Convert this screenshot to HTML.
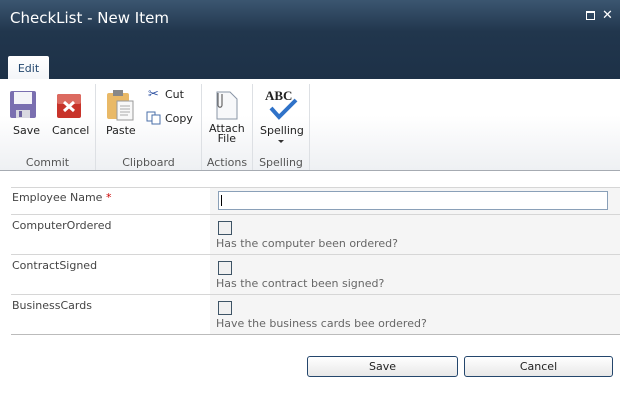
<!DOCTYPE html><html><head><style>
body{margin:0;width:620px;height:411px;background:#fff;font-family:Tahoma,"DejaVu Sans","Liberation Sans",sans-serif;font-size:11px;color:#444;position:relative;overflow:hidden}
.a{position:absolute}
.hdr{left:0;top:0;width:620px;height:79px;background:linear-gradient(#3b5670,#21364d 40%,#1d3147)}
.title{left:10px;top:9px;color:#fff;font-size:15px;font-family:"DejaVu Sans",sans-serif}
.tab{left:8px;top:56px;width:41px;height:24px;background:linear-gradient(#fff,#f3f5f8);border-radius:2px 2px 0 0;text-align:center;line-height:26px;color:#23476e;font-size:11px}
.rib{left:0;top:79px;width:620px;height:91px;background:linear-gradient(#fff 0,#fff 40%,#eef0f3);border-bottom:1px solid #a6abb2}
.sep{top:84px;width:1px;height:86px;background:#dde0e4}
.lbl{top:156px;font-size:11px;color:#555;text-align:center}
.t{font-size:11px;color:#222;text-align:center}
.line{left:11px;width:609px;height:1px;background:#d6d6d6}
.val{left:210px;top:187px;width:410px;height:147px;background:#f5f5f5}
.cb{width:12px;height:12px;border:1px solid #3e5466;background:#f0f0f0;left:218px}
.desc{left:216px;color:#666}
.btn{top:356px;height:19px;border:1px solid #24466c;border-radius:3px;background:linear-gradient(#fff,#e8e8e8);text-align:center;line-height:19px;color:#222}
</style></head><body>
<div class="a hdr"></div>
<div class="a title">CheckList - New Item</div>
<div class="a" style="left:586px;top:11px;width:7px;height:6px;border:1px solid #fff;border-top-width:2px"></div>
<div class="a" style="left:602px;top:8px;color:#fff;font-size:13px;font-weight:bold">✕</div>
<div class="a tab">Edit</div>
<div class="a rib"></div>
<div class="a sep" style="left:95px"></div><div class="a sep" style="left:201px"></div><div class="a sep" style="left:252px"></div><div class="a sep" style="left:309px"></div>
<!-- save icon -->
<svg class="a" style="left:10px;top:91px" width="27" height="28"><rect x="0" y="0" width="26" height="27" rx="2" fill="#7a6fb0"/><rect x="4" y="1" width="18" height="12" fill="#f4f4f8"/><rect x="6" y="19" width="14" height="8" fill="#d8d8e0"/><rect x="9" y="20" width="3" height="6" fill="#6d63a0"/></svg>
<svg class="a" style="left:57px;top:94px" width="24" height="24"><rect x="0" y="0" width="24" height="24" rx="2" fill="#c8332a"/><rect x="0" y="0" width="24" height="10" rx="2" fill="#dc6a60"/><path d="M7 8l10 9M17 8l-10 9" stroke="#fff" stroke-width="3"/></svg>
<div class="a t" style="left:13px;top:124px">Save</div><div class="a t" style="left:52px;top:124px">Cancel</div>
<div class="a lbl" style="left:0;width:95px">Commit</div>
<svg class="a" style="left:106px;top:89px" width="28" height="32"><rect x="1" y="4" width="22" height="26" rx="2" fill="#e9b967"/><rect x="7" y="1" width="10" height="6" fill="#888"/><rect x="11" y="12" width="16" height="19" fill="#f8f8f8" stroke="#999"/><path d="M14 17h10M14 20h10M14 23h10M14 26h8" stroke="#aaa"/></svg>
<div class="a t" style="left:106px;top:124px">Paste</div>
<div class="a" style="left:148px;top:87px;color:#2b4fa0;font-size:13px">✂</div><div class="a t" style="left:165px;top:88px">Cut</div>
<svg class="a" style="left:146px;top:111px" width="16" height="14"><rect x="1" y="1" width="8" height="9" fill="#fff" stroke="#4a6fa8"/><rect x="6" y="4" width="8" height="9" fill="#fff" stroke="#4a6fa8"/></svg><div class="a t" style="left:165px;top:112px">Copy</div>
<div class="a lbl" style="left:96px;width:105px">Clipboard</div>
<svg class="a" style="left:212px;top:90px" width="28" height="30"><path d="M5 2h13l7 7v20H5z" fill="#f7f8fa" stroke="#8a96a6"/><path d="M6 3v12c0 3 4 3 4 0V4" fill="none" stroke="#666" stroke-width="1.2"/></svg>
<div class="a t" style="left:209px;top:124px;line-height:10px">Attach<br>File</div>
<div class="a lbl" style="left:202px;width:50px">Actions</div>
<div class="a" style="left:265px;top:88px;font-family:'Liberation Serif',serif;font-weight:bold;font-size:13px;color:#222">ABC</div>
<svg class="a" style="left:268px;top:98px" width="30" height="22"><path d="M3 10l8 9L28 2" fill="none" stroke="#2f72c8" stroke-width="4"/></svg>
<div class="a t" style="left:260px;top:124px">Spelling</div>
<div class="a" style="left:278px;top:140px;width:0;height:0;border:3px solid transparent;border-top-color:#333"></div>
<div class="a lbl" style="left:253px;width:56px">Spelling</div>
<div class="a val"></div>
<div class="a line" style="top:187px"></div><div class="a line" style="top:214px"></div><div class="a line" style="top:254px"></div><div class="a line" style="top:294px"></div><div class="a line" style="top:334px;background:#bbb"></div>
<div class="a" style="left:12px;top:191px">Employee Name <span style="color:#c00">*</span></div>
<div class="a" style="left:218px;top:191px;width:388px;height:17px;border:1px solid #8aa0b8;background:#fff"><div style="margin:3px 2px;width:1px;height:11px;background:#000"></div></div>
<div class="a" style="left:12px;top:219px">ComputerOrdered</div>
<div class="a" style="left:12px;top:259px">ContractSigned</div>
<div class="a" style="left:12px;top:299px">BusinessCards</div>
<div class="a cb" style="top:221px"></div><div class="a cb" style="top:261px"></div><div class="a cb" style="top:301px"></div>
<div class="a desc" style="top:237px">Has the computer been ordered?</div>
<div class="a desc" style="top:277px">Has the contract been signed?</div>
<div class="a desc" style="top:317px">Have the business cards bee ordered?</div>
<div class="a btn" style="left:307px;width:149px">Save</div>
<div class="a btn" style="left:464px;width:147px">Cancel</div>
</body></html>
